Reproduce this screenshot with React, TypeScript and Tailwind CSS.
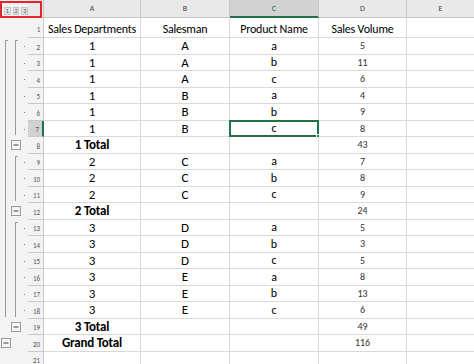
import React from 'react';

interface Row {
  n: number;
  a?: string;
  b?: string;
  c?: string;
  d?: string;
  bold?: boolean;
}

const ROWS: Row[] = [
  { n: 2, a: '1', b: 'A', c: 'a', d: '5' },
  { n: 3, a: '1', b: 'A', c: 'b', d: '11' },
  { n: 4, a: '1', b: 'A', c: 'c', d: '6' },
  { n: 5, a: '1', b: 'B', c: 'a', d: '4' },
  { n: 6, a: '1', b: 'B', c: 'b', d: '9' },
  { n: 7, a: '1', b: 'B', c: 'c', d: '8' },
  { n: 8, a: '1 Total', d: '43', bold: true },
  { n: 9, a: '2', b: 'C', c: 'a', d: '7' },
  { n: 10, a: '2', b: 'C', c: 'b', d: '8' },
  { n: 11, a: '2', b: 'C', c: 'c', d: '9' },
  { n: 12, a: '2 Total', d: '24', bold: true },
  { n: 13, a: '3', b: 'D', c: 'a', d: '5' },
  { n: 14, a: '3', b: 'D', c: 'b', d: '3' },
  { n: 15, a: '3', b: 'D', c: 'c', d: '5' },
  { n: 16, a: '3', b: 'E', c: 'a', d: '8' },
  { n: 17, a: '3', b: 'E', c: 'b', d: '13' },
  { n: 18, a: '3', b: 'E', c: 'c', d: '6' },
  { n: 19, a: '3 Total', d: '49', bold: true },
  { n: 20, a: 'Grand Total', d: '116', bold: true },
  { n: 21 },
];

const H = 16.5; // data row height
const TOP = 38; // y where row 2 starts (below header + row 1)

// y centre of a sheet row inside the gutter svg (svg starts at y=18)
const cy = (n: number) => TOP - 18 + (n - 2) * H + H / 2;

function MinusBox({ x, n }: { x: number; n: number }) {
  const y = Math.round(cy(n) - 5);
  return (
    <g>
      <rect x={x + 0.5} y={y + 0.5} width={9} height={9} fill="#f4f4f4" stroke="#9a9a9a" />
      <line x1={x + 2.5} y1={y + 5} x2={x + 7.5} y2={y + 5} stroke="#444" />
    </g>
  );
}

function Bracket({ x, from, to }: { x: number; from: number; to: number }) {
  const y1 = Math.round(cy(from) - H / 2 + 2);
  const y2 = Math.round(cy(to) + H / 2 - 2);
  return (
    <g stroke="#9a9a9a">
      <line x1={x + 0.5} y1={y1} x2={x + 0.5} y2={y2} />
      <line x1={x} y1={y1 + 0.5} x2={x + 3} y2={y1 + 0.5} />
    </g>
  );
}

function Gutter() {
  const details = ROWS.filter((r) => !r.bold && r.n < 21).map((r) => r.n);
  return (
    <svg width={28} height={346} className="block">
      <Bracket x={5} from={2} to={18} />
      <Bracket x={15} from={2} to={7} />
      <Bracket x={15} from={9} to={11} />
      <Bracket x={15} from={13} to={18} />
      <MinusBox x={11} n={8} />
      <MinusBox x={11} n={12} />
      <MinusBox x={11} n={19} />
      <MinusBox x={1} n={20} />
      {details.map((n) => (
        <rect key={n} x={24} y={Math.round(cy(n))} width={1} height={1} fill="#777" />
      ))}
    </svg>
  );
}

const cellBase = 'flex items-center justify-center whitespace-nowrap border-r border-b border-[#d9d9d9] shrink-0';

export default function App() {
  return (
    <div
      className="relative flex h-[364px] w-[474px] overflow-hidden bg-white text-black"
      style={{ fontFamily: 'Carlito, Lato, "Liberation Sans", sans-serif' }}
    >
      {/* outline gutter */}
      <div className="flex w-[28px] shrink-0 flex-col bg-[#f3f3f3]">
        <div className="flex h-[18px] items-end gap-[2px] pb-[3px] pl-[4px]">
          {['1', '2', '3'].map((l) => (
            <span
              key={l}
              className="flex h-[8px] w-[7px] items-center justify-center border border-[#c4c4c4] bg-[#e4e4e4] text-[6px] leading-none text-[#555]"
            >
              {l}
            </span>
          ))}
        </div>
        <Gutter />
      </div>

      {/* sheet */}
      <div className="flex flex-1 flex-col">
        {/* column letters */}
        <div className="flex h-[18px] shrink-0 bg-[#e9e9e9] text-[8px] text-[#444]">
          <div className="w-[16px] shrink-0 border-r border-b border-[#c8c8c8]" />
          <div className="flex w-[97px] shrink-0 items-end justify-center border-r border-b border-[#c8c8c8] pb-[3px]">A</div>
          <div className="flex w-[89px] shrink-0 items-end justify-center border-r border-b border-[#c8c8c8] pb-[3px]">B</div>
          <div className="flex w-[89px] shrink-0 items-end justify-center border-r border-b-2 border-[#c8c8c8] border-b-[#217346] bg-[#d2d2d2] pb-[2px] text-[#1e5c3a]">C</div>
          <div className="flex w-[88px] shrink-0 items-end justify-center border-r border-b border-[#c8c8c8] pb-[3px]">D</div>
          <div className="flex flex-1 items-end justify-center border-b border-[#c8c8c8] pb-[3px]">E</div>
        </div>

        {/* row 1: headings */}
        <div className="flex h-[20px] shrink-0 text-[12px] tracking-[-0.2px]">
          <div className="flex w-[16px] shrink-0 items-end justify-end border-r border-b border-[#c8c8c8] bg-[#f3f3f3] pr-[3px] pb-[2px] text-[7px] text-[#555]">1</div>
          <div className={`${cellBase} w-[97px] pt-[2px]`}>Sales Departments</div>
          <div className={`${cellBase} w-[89px] pt-[2px]`}>Salesman</div>
          <div className={`${cellBase} w-[89px] pt-[2px]`}>Product Name</div>
          <div className={`${cellBase} w-[88px] pt-[2px]`}>Sales Volume</div>
          <div className="flex-1 border-b border-[#d9d9d9]" />
        </div>

        {ROWS.map((r) => {
          const active = r.n === 7;
          return (
            <div key={r.n} className="flex shrink-0" style={{ height: H }}>
              <div
                className={`flex w-[16px] shrink-0 items-end justify-end border-b border-[#c8c8c8] pr-[3px] pb-[3px] text-[7px] leading-none text-[#555] ${
                  active ? 'border-r-2 border-r-[#217346] bg-[#d2d2d2] text-[#1e5c3a]' : 'border-r bg-[#f3f3f3]'
                }`}
              >
                {r.n}
              </div>
              <div className={`${cellBase} w-[97px] text-[13px] ${r.bold ? 'font-bold tracking-[-0.2px]' : ''}`}>{r.a}</div>
              <div className={`${cellBase} w-[89px] text-[13px]`}>{r.b}</div>
              <div className={`${cellBase} relative w-[89px] text-[12px]`}>
                {r.c}
                {active && (
                  <span className="absolute -top-px -left-px h-[calc(100%+2px)] w-[calc(100%+2px)] border-2 border-[#217346]">
                    <span className="absolute -right-[3px] -bottom-[3px] h-[4px] w-[4px] border border-white bg-[#217346]" />
                  </span>
                )}
              </div>
              <div className={`${cellBase} w-[88px] text-[10px] text-[#333]`}>{r.d}</div>
              <div className="flex-1 border-b border-[#d9d9d9]" />
            </div>
          );
        })}
      </div>

      {/* red annotation box round the outline level buttons */}
      <div className="pointer-events-none absolute top-[1px] left-0 h-[17px] w-[42px] border-2 border-[#e2262b]" />
    </div>
  );
}
